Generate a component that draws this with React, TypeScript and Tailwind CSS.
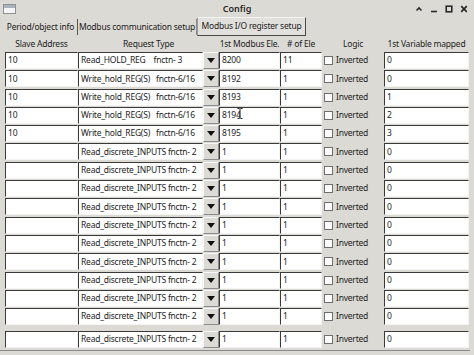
import React from "react";

type Row = { slave: string; type: string; ele: string; num: string; v: string };

const rows: Row[] = [
  { slave: "10", type: "Read_HOLD_REG    fnctn- 3", ele: "8200", num: "11", v: "0" },
  { slave: "10", type: "Write_hold_REG(S)   fnctn-6/16", ele: "8192", num: "1", v: "0" },
  { slave: "10", type: "Write_hold_REG(S)   fnctn-6/16", ele: "8193", num: "1", v: "1" },
  { slave: "10", type: "Write_hold_REG(S)   fnctn-6/16", ele: "8194", num: "1", v: "2" },
  { slave: "10", type: "Write_hold_REG(S)   fnctn-6/16", ele: "8195", num: "1", v: "3" },
  ...Array.from({ length: 10 }, () => ({
    slave: "",
    type: "Read_discrete_INPUTS fnctn- 2",
    ele: "1",
    num: "1",
    v: "0",
  })),
];

const lastRow: Row = { slave: "", type: "Read_discrete_INPUTS fnctn- 2", ele: "1", num: "1", v: "0" };

const inputCls =
  "h-full bg-white border-t border-l border-t-[#3a3a3a] border-l-[#3a3a3a] border-b border-r border-b-[#f4f4f4] border-r-[#f4f4f4] pl-[2px] flex items-center whitespace-pre overflow-hidden";

function RowView({ r }: { r: Row }) {
  return (
    <div className="flex h-[17px] shrink-0">
      <div className={`${inputCls} w-[73px]`}>{r.slave}</div>
      <div className={`${inputCls} w-[125px]`}>{r.type}</div>
      <div className="w-[16px] h-full bg-[#dcdad5] border-t border-l border-t-[#f8f8f8] border-l-[#f8f8f8] border-b border-r border-b-[#8c8c8c] border-r-[#8c8c8c] flex items-center justify-center">
        <svg width="8" height="5" viewBox="0 0 8 5">
          <polygon points="0,0 8,0 4,5" fill="#111" />
        </svg>
      </div>
      <div className={`${inputCls} w-[61px]`}>{r.ele}</div>
      <div className={`${inputCls} w-[42px]`}>{r.num}</div>
      <div className="w-[62px] h-full flex items-center pl-[2px] whitespace-nowrap">
        <div className="w-[9px] h-[9px] bg-white border border-[#6e6e6e] shrink-0" />
        <span className="ml-[3px]">Inverted</span>
      </div>
      <div className={`${inputCls} w-[85px]`}>{r.v}</div>
    </div>
  );
}

export default function App() {
  return (
    <div
      className="relative w-[474px] h-[355px] overflow-hidden bg-[#dcdad5] text-[#1c1c1c] text-[8.5px] leading-none tracking-[-0.22px]"
      style={{ fontFamily: "'Noto Sans', 'Open Sans', sans-serif" }}
    >
      {/* Title bar */}
      <div className="relative h-[17px] flex items-center">
        <div className="ml-[3px] mt-[1px] w-[13px] h-[10px] border border-[#8e9094] bg-[#f4f4f4] flex flex-col">
          <div className="h-[3px] bg-[#a9b2bd]" />
        </div>
        <div className="absolute left-0 right-0 top-0 h-[17px] flex items-center justify-center font-semibold text-[9px] text-[#2a2a2a] tracking-normal">
          Config
        </div>
        <div className="ml-auto mr-[6px] flex items-center gap-[7px] text-[#2a2a2a]">
          <svg width="8" height="8" viewBox="0 0 8 8">
            <polyline points="1.5,5.5 4,3 6.5,5.5" fill="none" stroke="#2a2a2a" strokeWidth="1.6" />
          </svg>
          <svg width="8" height="8" viewBox="0 0 8 8">
            <line x1="1" y1="6.5" x2="7" y2="6.5" stroke="#2a2a2a" strokeWidth="1.6" />
          </svg>
          <svg width="8" height="8" viewBox="0 0 8 8">
            <rect x="1.2" y="1.2" width="5.6" height="5.6" fill="none" stroke="#2a2a2a" strokeWidth="1.6" />
          </svg>
          <svg width="8" height="8" viewBox="0 0 8 8">
            <line x1="1.2" y1="1.2" x2="6.8" y2="6.8" stroke="#2a2a2a" strokeWidth="1.7" />
            <line x1="6.8" y1="1.2" x2="1.2" y2="6.8" stroke="#2a2a2a" strokeWidth="1.7" />
          </svg>
        </div>
      </div>

      {/* Tabs */}
      <div className="h-[19px] flex items-stretch pl-[4px] whitespace-nowrap">
        <div className="w-[74px] mt-[2px] mb-[1px] flex items-center justify-center border-r border-r-[#555]">
          Period/object info
        </div>
        <div className="w-[119px] mt-[2px] mb-[1px] flex items-center justify-center border-r border-r-[#8a8a8a]">
          Modbus communication setup
        </div>
        <div className="w-[109px] flex items-center justify-center bg-[#e2e0dc] border-t border-l border-t-[#f4f4f4] border-l-[#9a9a9a] border-b border-r border-b-[#4a4a4a] border-r-[#4a4a4a]">
          Modbus I/O register setup
        </div>
      </div>

      {/* Table */}
      <div className="pl-[5px] mt-[1px]">
        <div className="flex h-[15px] items-center whitespace-nowrap">
          <div className="w-[73px] text-center">Slave Address</div>
          <div className="w-[141px] text-center">Request Type</div>
          <div className="w-[61px] text-center">1st Modbus Ele.</div>
          <div className="w-[42px] text-center"># of Ele</div>
          <div className="w-[62px] text-center">Logic</div>
          <div className="w-[85px] text-center">1st Variable mapped</div>
        </div>
        <div className="flex flex-col gap-[1.3px]">
          {rows.map((r, i) => (
            <RowView key={i} r={r} />
          ))}
        </div>
        <div className="mt-[6px]">
          <RowView r={lastRow} />
        </div>
      </div>
      <div className="w-[470px] h-px bg-[#8a8a8a] mt-[2px]" />

      {/* mouse cursor (I-beam) */}
      <svg className="absolute left-[237px] top-[108px]" width="6" height="11" viewBox="0 0 6 11">
        <path d="M0.5 0.5 H2.5 M3.5 0.5 H5.5 M3 0.5 V10.5 M0.5 10.5 H2.5 M3.5 10.5 H5.5" stroke="#222" strokeWidth="1" fill="none" />
      </svg>
    </div>
  );
}
